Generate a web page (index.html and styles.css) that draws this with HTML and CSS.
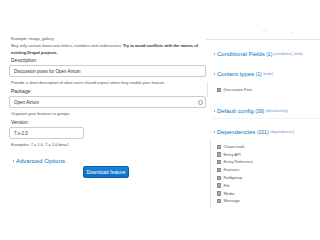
FILE: index.html
```html
<!DOCTYPE html>
<html lang="en">
<head>
  <meta charset="UTF-8" />
  <title>Features - Create feature</title>
  <link rel="stylesheet" href="styles.css">
</head>
<body>
  <div class="page">
    <div class="main">
      <div class="help intro">
        Example: image_gallery<br>
        May only contain lowercase letters, numbers and underscores. <strong>Try to avoid conflicts with the names of<br>existing Drupal projects.</strong>
      </div>

      <div class="form-item">
        <label>Description</label>
        <div class="text-input wide">Discussion posts for Open Atrium</div>
        <div class="help">Provide a short description of what users should expect when they enable your feature.</div>
      </div>

      <div class="form-item">
        <label>Package</label>
        <div class="text-input wide">Open Atrium<span class="throbber"></span></div>
        <div class="help">Organize your features in groups.</div>
      </div>

      <div class="form-item">
        <label>Version</label>
        <div class="text-input short">7.x-2.0</div>
        <div class="help">Examples: 7.x-1.0, 7.x-1.0-beta1</div>
      </div>

      <div class="advanced"><span class="arrow"></span>Advanced Options</div>

      <div class="actions">
        <button class="btn">Download feature</button>
      </div>
    </div>

    <div class="side">
      <div class="side-top"><span>‹ ›</span><span>⌄</span></div>

      <div class="component"><span class="arrow"></span>Conditional Fields <span class="count">(1)</span> <span class="machine">(conditional_fields)</span></div>

      <div class="component"><span class="arrow"></span>Content types <span class="count">(1)</span> <span class="machine">(node)</span></div>
      <div class="items types">
        <div class="item"><span class="check"></span>Discussion Post</div>
      </div>

      <div class="component config"><span class="arrow"></span>Default config <span class="count">(39)</span> <span class="machine">(defaultconfig)</span></div>

      <div class="component"><span class="arrow"></span>Dependencies <span class="count">(101)</span> <span class="machine">(dependencies)</span></div>
      <div class="items deps">
        <div class="item"><span class="check"></span>Chaos tools</div>
        <div class="item"><span class="check"></span>Entity API</div>
        <div class="item"><span class="check"></span>Entity Reference</div>
        <div class="item"><span class="check"></span>Features</div>
        <div class="item"><span class="check"></span>Fieldgroup</div>
        <div class="item"><span class="check"></span>File</div>
        <div class="item"><span class="check"></span>Media</div>
        <div class="item"><span class="check"></span>Message</div>
      </div>
    </div>
  </div>
</body>
</html>
```

FILE: styles.css
```css
body {
  margin: 0;
  background: #fff;
  font-family: "Liberation Sans", Arial, sans-serif;
  color: #333;
}
.page {
  display: flex;
  width: 320px;
  height: 240px;
  overflow: hidden;
}
.main {
  width: 197px;
  flex-shrink: 0;
  padding: 35px 0 0 9px;
}
.help {
  font-size: 4px;
  line-height: 7px;
  color: #555;
  padding-left: 2px;
  white-space: nowrap;
  margin-top: 2px;
}
.help strong {
  color: #333;
}
.intro {
  margin-top: 0;
  margin-bottom: 1px;
}
.form-item {
  margin-bottom: 2px;
}
.form-item label {
  display: block;
  font-size: 5px;
  line-height: 7px;
  color: #333;
  padding-left: 2px;
  margin-bottom: 1px;
}
.text-input {
  display: flex;
  align-items: center;
  justify-content: space-between;
  box-sizing: border-box;
  height: 12px;
  border: 1px solid #ccc;
  border-radius: 2px;
  padding: 0 2px 0 4px;
  font-size: 4.5px;
  color: #333;
}
.wide {
  width: 197px;
}
.short {
  width: 75px;
}
.throbber {
  width: 3px;
  height: 3px;
  border: 0.7px solid #999;
  border-radius: 50%;
}
.advanced {
  display: flex;
  align-items: center;
  font-size: 6px;
  line-height: 8px;
  color: #0074bd;
  margin: 9px 0 0 4px;
}
.arrow {
  width: 0;
  height: 0;
  border-top: 1.2px solid transparent;
  border-bottom: 1.2px solid transparent;
  border-left: 1.6px solid #555;
  margin-right: 2px;
}
.actions {
  display: flex;
  padding-left: 74px;
  margin-top: 1px;
}
.btn {
  height: 12px;
  width: 46px;
  padding: 0;
  border: 1px solid #0a5fa8;
  border-radius: 2px;
  background: linear-gradient(#1b84d6, #0a6fc2);
  color: #fff;
  font-family: "Liberation Sans", Arial, sans-serif;
  font-size: 5px;
}
.side {
  flex: 1;
  padding-left: 6px;
}
.side-top {
  height: 40px;
  border-bottom: 1px solid #e4e4e4;
  margin-left: -6px;
  margin-bottom: 10px;
  display: flex;
  align-items: flex-end;
  gap: 24px;
  padding-left: 57px;
  box-sizing: border-box;
  padding-bottom: 4px;
  font-size: 4px;
  line-height: 6px;
  color: #bbb;
}
.component {
  display: flex;
  align-items: center;
  white-space: nowrap;
  font-size: 6px;
  line-height: 8px;
  color: #0074bd;
  padding-left: 2px;
  margin-bottom: 12px;
}
.component .count {
  font-size: 5px;
  margin-left: 1.5px;
}
.component .machine {
  font-size: 3.5px;
  color: #6d93bd;
  margin-left: 1.5px;
}
.config {
  padding-bottom: 3px;
  border-bottom: 1px dotted #e6e6e6;
  margin-bottom: 9px;
}
.items {
  border-left: 1px solid #e2e2e2;
  padding: 3px 0 3px 9px;
  margin: -8px 0 0 -5px;
}
.types {
  padding-top: 4px;
  margin-bottom: 10px;
}
.deps {
  margin-left: -2px;
  padding-left: 6px;
}
.item {
  display: flex;
  align-items: center;
  font-size: 4px;
  line-height: 7.8px;
  color: #555;
}
.check {
  width: 2.4px;
  height: 2.4px;
  border: 0.6px solid #888;
  background: #aaa;
  margin-right: 2px;
}
```
